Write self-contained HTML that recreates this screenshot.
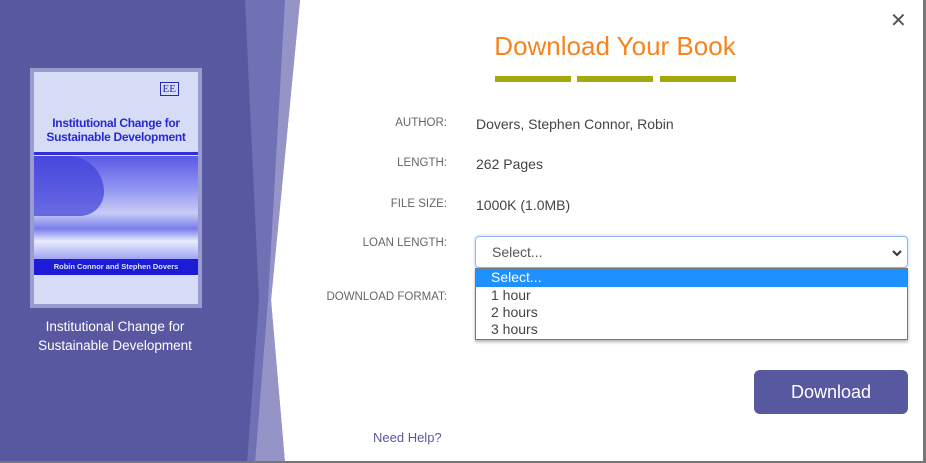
<!DOCTYPE html>
<html><head><meta charset="utf-8"><style>
*{margin:0;padding:0;box-sizing:border-box}
body{width:926px;height:463px;overflow:hidden;background:#fff;font-family:"Liberation Sans",Arial,sans-serif;position:relative}
.abs{position:absolute}
.lbl{position:absolute;right:479px;font-size:11.5px;color:#666;text-align:right;white-space:nowrap}
.val{position:absolute;left:476px;font-size:14px;color:#444}
</style></head><body>
<svg class="abs" style="left:0;top:0" width="310" height="463">
<polygon points="238,0 300,0 271,300 285,463 238,463" fill="#7070b4"/>
<polygon points="285,0 300,0 271,300 285,463 255,463 268,300" fill="#9494c6"/>
<polygon points="0,0 245,0 259,300 247,463 0,463" fill="#5858a1"/>
</svg>
<div class="abs" style="left:30px;top:68px;width:172px;height:240px;background:#9a9cd0;padding:4px">
 <div style="position:relative;width:164px;height:232px;background:#d6dcf6;overflow:hidden">
  <div class="abs" style="right:19px;top:10px;border:1px solid #2a2ab0;color:#2a2ab0;font-family:'Liberation Serif',serif;font-size:11px;padding:0 2px;line-height:12px">EE</div>
  <div class="abs" style="left:0;width:164px;top:44px;text-align:center;color:#2a2ad0;font-weight:bold;font-size:12px;line-height:14px;letter-spacing:-0.3px">Institutional Change for<br>Sustainable Development</div>
  <div class="abs" style="left:0;top:80px;width:164px;height:3px;background:#3030d8"></div>
  <div class="abs" style="left:0;top:84px;width:164px;height:104px;background:linear-gradient(180deg,#5a5ae8 0%,#8e92f0 30%,#c8ccf6 55%,#7a7eee 70%,#e8ecfc 82%,#9ca0f2 100%)"></div>
  <div class="abs" style="left:0;top:84px;width:70px;height:60px;background:#4040d8;border-radius:0 60px 40px 0;opacity:.7"></div>
  <div class="abs" style="left:0;top:187px;width:164px;height:16px;background:#1c1cd8;color:#dfe2ff;font-size:7.5px;font-weight:bold;text-align:center;line-height:16px">Robin Connor and Stephen Dovers</div>
 </div>
</div>
<div class="abs" style="left:0;width:230px;top:317px;text-align:center;color:#fff;font-size:13.5px;line-height:19px">Institutional Change for<br>Sustainable Development</div>

<div class="abs" style="left:890px;top:8px;font-size:20px;color:#555">✕</div>
<div class="abs" style="left:330px;width:570px;top:31px;text-align:center;color:#f5841f;font-size:26px">Download Your Book</div>
<div class="abs" style="left:495px;top:76px;width:76px;height:6px;background:#a3a90f"></div>
<div class="abs" style="left:577px;top:76px;width:76px;height:6px;background:#a3a90f"></div>
<div class="abs" style="left:660px;top:76px;width:76px;height:6px;background:#a3a90f"></div>

<div class="lbl" style="top:117px">AUTHOR:</div><div class="val" style="top:116px">Dovers, Stephen Connor, Robin</div>
<div class="lbl" style="top:157px">LENGTH:</div><div class="val" style="top:156px">262 Pages</div>
<div class="lbl" style="top:198px">FILE SIZE:</div><div class="val" style="top:197px">1000K (1.0MB)</div>
<div class="lbl" style="top:237px">LOAN LENGTH:</div>
<div class="lbl" style="top:291px">DOWNLOAD FORMAT:</div>

<div class="abs" style="left:475px;top:236px;width:433px;height:32px;border:1px solid #8fb4f0;border-radius:4px;box-shadow:0 0 3px #b8d0f8;font-size:14px;color:#555;padding:7px 0 0 16px">Select...
 <svg class="abs" style="right:5px;top:12px" width="10" height="8"><path d="M1 2 L5 6 L9 2" stroke="#333" stroke-width="2" fill="none"/></svg></div>
<div class="abs" style="left:475px;top:268px;width:433px;height:72px;border:1px solid #777;background:#fff;box-shadow:0 2px 3px rgba(0,0,0,.3);font-size:14px;color:#444;line-height:17px">
 <div style="background:#1e90ff;color:#fff;padding-left:15px;height:18px">Select...</div>
 <div style="padding-left:15px">1 hour</div>
 <div style="padding-left:15px">2 hours</div>
 <div style="padding-left:15px">3 hours</div>
</div>

<div class="abs" style="left:754px;top:370px;width:154px;height:44px;background:#5858a1;border-radius:6px;color:#fff;font-size:18px;text-align:center;line-height:44px">Download</div>
<div class="abs" style="left:373px;top:430px;font-size:13px;color:#5858a1">Need Help?</div>
<div class="abs" style="left:923px;top:0;width:3px;height:463px;background:#777"></div>
<div class="abs" style="left:0;top:461px;width:926px;height:2px;background:#777"></div>
</body></html>
